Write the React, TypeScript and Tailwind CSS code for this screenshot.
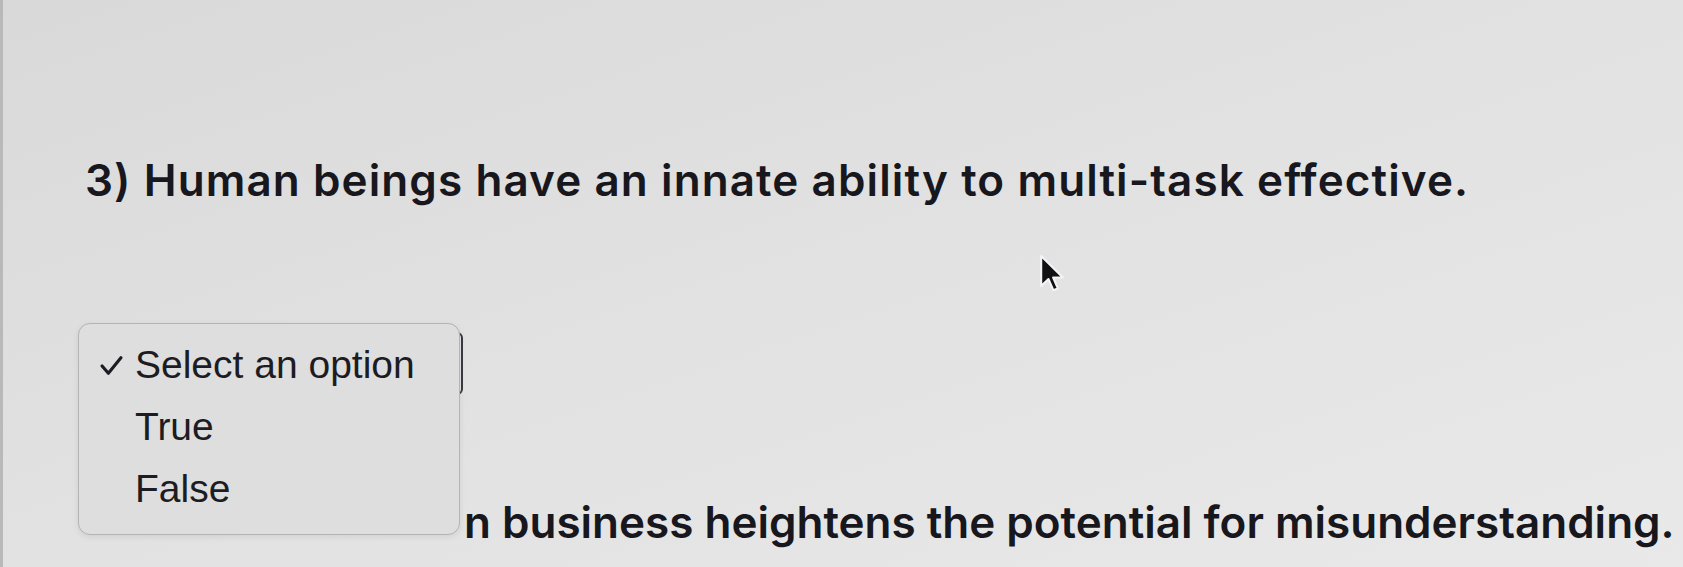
import React from 'react';

const options = ['Select an option', 'True', 'False'];

function Check() {
  return (
    <svg viewBox="0 0 22 20" className="h-[21px] w-[23px]" aria-hidden>
      <path d="M2 10.5 L8 17.5 L20 2.5" fill="none" stroke="#1c1c22" strokeWidth="3" strokeLinecap="round" strokeLinejoin="round" />
    </svg>
  );
}

function Cursor() {
  return (
    <svg viewBox="0 0 20 30" className="h-[40px] w-[27px]" aria-hidden>
      <path
        d="M1.5 1.5 L1.5 24 L7 18.8 L10.6 27.2 L14 25.8 L10.5 17.6 L17.8 17.6 Z"
        fill="#111114"
        stroke="#f4f4f4"
        strokeWidth="1.6"
        strokeLinejoin="round"
      />
    </svg>
  );
}

function OptionList() {
  return (
    <div
      role="listbox"
      className="absolute -left-[4px] -top-[11px] h-[212px] w-[382px] rounded-[12px] border border-[#b4b4b4] bg-[#dedede] pt-[10px] shadow-[0_2px_6px_rgba(0,0,0,0.08)]"
      style={{ fontFamily: '"Liberation Sans", Arial, sans-serif' }}
    >
      {options.map((o, i) => (
        <div key={o} role="option" aria-selected={i === 0} className="flex h-[62px] items-center text-[39px] leading-[62px] text-[#1c1c22]">
          <span className="flex w-[56px] shrink-0 pl-[21px]">{i === 0 && <Check />}</span>
          <span>{o}</span>
        </div>
      ))}
    </div>
  );
}

export default function App() {
  return (
    <div
      className="relative h-[567px] w-full overflow-hidden border-l-[3px] border-[#b9b9b9] bg-gradient-to-br from-[#d9d9d9] via-[#e2e2e2] to-[#e9e9e9] text-[#17171d]"
      style={{ fontFamily: 'Inter, "Noto Sans", sans-serif' }}
    >
      <h2 className="ml-[82px] mt-[158px] whitespace-nowrap text-[44px] font-semibold leading-none tracking-[0.025em]">
        3) Human beings have an innate ability to multi-task effective.
      </h2>

      <div className="relative ml-[77px] mt-[130px] h-[63px] w-[383px] rounded-[6px] border-2 border-[#3a3a40] bg-[#e4e4e4]">
        <OptionList />
      </div>

      <p className="ml-[461px] mt-[105px] whitespace-nowrap text-[44px] font-semibold leading-none">
        n business heightens the potential for misunderstanding.
      </p>

      <div className="absolute left-[1036px] top-[254px]">
        <Cursor />
      </div>
    </div>
  );
}
